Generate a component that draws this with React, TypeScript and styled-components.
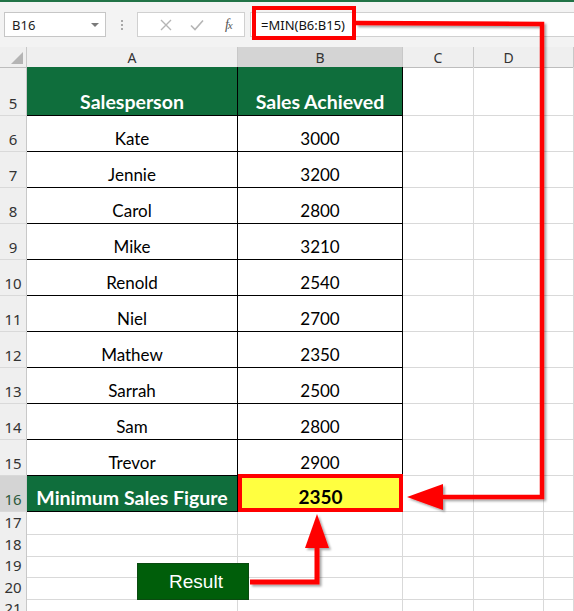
import React from "react";
import styled, { createGlobalStyle } from "styled-components";

const Global = createGlobalStyle`
  html, body { margin: 0; padding: 0; background: #ffffff; overflow: hidden; }
  * { box-sizing: border-box; }
`;

const GRID = "#d9d9d9";
const HEAD_BG = "#efefef";
const HEAD_SEL = "#d4d4d4";
const GREEN = "#0f6e3c";

const Page = styled.div`
  position: relative;
  width: 574px;
  height: 611px;
  overflow: hidden;
  background: #fff;
  font-family: "Lato", "Noto Sans", sans-serif;
`;

const FormulaBar = styled.div`
  height: 47px;
  border-top: 2px solid #217346;
  background: #f3f3f3;
  display: flex;
  align-items: flex-start;
  padding: 10px 0 0 4px;
`;

const NameBox = styled.div`
  width: 102px;
  height: 25px;
  background: #fff;
  border: 1px solid #c6c6c6;
  display: flex;
  align-items: center;
  justify-content: space-between;
  padding: 0 6px 0 7px;
  font-family: "Noto Sans", "Open Sans", sans-serif;
  font-size: 13px;
  color: #222;
`;

const DropCaret = styled.span`
  width: 0;
  height: 0;
  border-left: 4px solid transparent;
  border-right: 4px solid transparent;
  border-top: 4px solid #7a7a7a;
`;

const Dots = styled.div`
  width: 31px;
  height: 25px;
  display: flex;
  flex-direction: column;
  align-items: center;
  justify-content: center;
  gap: 2px;
  span {
    width: 2px;
    height: 2px;
    background: #a8a8a8;
  }
`;

const ButtonsBox = styled.div`
  width: 108px;
  height: 25px;
  background: #fff;
  border: 1px solid #d0d0d0;
  display: flex;
  align-items: center;
  padding-left: 12px;
`;

const IconSlot = styled.div`
  width: 37px;
  height: 23px;
  display: flex;
  align-items: center;
  justify-content: center;
`;

const Fx = styled.span`
  font-family: "Liberation Serif", "DejaVu Serif", serif;
  font-style: italic;
  font-size: 14px;
  color: #555;
  letter-spacing: -1px;
  small { font-size: 11px; }
`;

const FormulaBox = styled.div`
  flex: 1;
  margin-left: 5px;
  height: 25px;
  background: #fff;
  border: 1px solid #d0d0d0;
  border-right: none;
  display: flex;
  align-items: center;
  padding-left: 10px;
  font-family: "Noto Sans", "Open Sans", sans-serif;
  font-size: 13px;
  color: #111;
`;

const Sheet = styled.div`
  position: relative;
`;

const Row = styled.div<{ $h: number }>`
  display: grid;
  grid-template-columns: 27px 211px 165px 71px 70px 1fr;
  height: ${(p) => p.$h}px;
`;

const Corner = styled.div`
  background: ${HEAD_BG};
  border-right: 1px solid #c8c8c8;
  border-bottom: 1px solid #bdbdbd;
  position: relative;
  &::after {
    content: "";
    position: absolute;
    right: 3px;
    bottom: 3px;
    width: 0;
    height: 0;
    border-left: 12px solid transparent;
    border-bottom: 12px solid #b4b4b4;
  }
`;

const ColHead = styled.div<{ $sel?: boolean }>`
  background: ${(p) => (p.$sel ? HEAD_SEL : HEAD_BG)};
  border-right: 1px solid #c8c8c8;
  border-bottom: 1px solid #bdbdbd;
  display: flex;
  align-items: center;
  justify-content: center;
  font-family: "Noto Sans", "Open Sans", sans-serif;
  font-size: 14px;
  color: #333;
  padding-top: 1px;
`;

const RowHead = styled.div<{ $sel?: boolean }>`
  background: ${(p) => (p.$sel ? HEAD_SEL : HEAD_BG)};
  border-right: 1px solid #c8c8c8;
  border-bottom: 1px solid ${GRID};
  display: flex;
  align-items: flex-end;
  justify-content: center;
  padding-bottom: 2px;
  font-family: "Noto Sans", "Open Sans", sans-serif;
  font-size: 15px;
  line-height: 20px;
  color: ${(p) => (p.$sel ? "#2d5a3d" : "#333")};
`;

const Cell = styled.div`
  border-right: 1px solid ${GRID};
  border-bottom: 1px solid ${GRID};
`;

const TableCell = styled.div<{ $head?: boolean }>`
  background: ${(p) => (p.$head ? GREEN : "#fff")};
  color: ${(p) => (p.$head ? "#fff" : "#000")};
  border-right: 1px solid #000;
  border-bottom: 1px solid #000;
  display: flex;
  align-items: flex-end;
  justify-content: center;
  padding-bottom: ${(p) => (p.$head ? 2 : 1)}px;
  font-size: ${(p) => (p.$head ? 19.5 : 17)}px;
  line-height: 22px;
  font-weight: ${(p) => (p.$head ? 700 : 400)};
`;

const ResultCell = styled.div`
  background: #ffff40;
  border: 4px solid #ff0000;
  margin-top: -2px;
  display: flex;
  align-items: center;
  justify-content: center;
  padding-top: 7px;
  font-size: 19px;
  font-weight: 700;
  color: #000;
`;

const ResultButton = styled.div`
  position: absolute;
  left: 137px;
  top: 516px;
  width: 112px;
  height: 37px;
  background: #005e0a;
  border: 1px solid #0a4a10;
  display: flex;
  align-items: center;
  justify-content: center;
  padding-left: 6px;
  font-family: "Liberation Sans", Arial, sans-serif;
  font-size: 19px;
  color: #fff;
`;

const Overlay = styled.svg`
  position: absolute;
  left: 0;
  top: 0;
  pointer-events: none;
`;

const data: [string, string][] = [
  ["Kate", "3000"],
  ["Jennie", "3200"],
  ["Carol", "2800"],
  ["Mike", "3210"],
  ["Renold", "2540"],
  ["Niel", "2700"],
  ["Mathew", "2350"],
  ["Sarrah", "2500"],
  ["Sam", "2800"],
  ["Trevor", "2900"],
];

const EmptyCells = () => (
  <>
    <Cell />
    <Cell />
    <Cell />
  </>
);

export default function App() {
  const small = [17, 18, 19, 20, 21];
  return (
    <Page>
      <Global />
      <FormulaBar>
        <NameBox>
          <span>B16</span>
          <DropCaret />
        </NameBox>
        <Dots>
          <span />
          <span />
          <span />
        </Dots>
        <ButtonsBox>
          <IconSlot>
            <svg width="12" height="12" viewBox="0 0 12 12">
              <path d="M1 1 L11 11 M11 1 L1 11" stroke="#b5b5b5" strokeWidth="1.4" fill="none" />
            </svg>
          </IconSlot>
          <IconSlot>
            <svg width="14" height="12" viewBox="0 0 14 12">
              <path d="M1 6.5 L5 10.5 L13 1.5" stroke="#b5b5b5" strokeWidth="1.6" fill="none" />
            </svg>
          </IconSlot>
          <IconSlot>
            <Fx>
              f<small>x</small>
            </Fx>
          </IconSlot>
        </ButtonsBox>
        <FormulaBox>=MIN(B6:B15)</FormulaBox>
      </FormulaBar>

      <Sheet>
        <Row $h={20}>
          <Corner />
          <ColHead>A</ColHead>
          <ColHead $sel>B</ColHead>
          <ColHead>C</ColHead>
          <ColHead>D</ColHead>
          <ColHead />
        </Row>
        <Row $h={49}>
          <RowHead>5</RowHead>
          <TableCell $head>Salesperson</TableCell>
          <TableCell $head>Sales Achieved</TableCell>
          <EmptyCells />
        </Row>
        {data.map(([name, val], i) => (
          <Row $h={36} key={name + i}>
            <RowHead>{i + 6}</RowHead>
            <TableCell>{name}</TableCell>
            <TableCell>{val}</TableCell>
            <EmptyCells />
          </Row>
        ))}
        <Row $h={36}>
          <RowHead $sel>16</RowHead>
          <TableCell $head>Minimum Sales Figure</TableCell>
          <ResultCell>2350</ResultCell>
          <EmptyCells />
        </Row>
        {small.map((n, i) => (
          <Row $h={i % 2 === 0 ? 22 : 21} key={n}>
            <RowHead>{n}</RowHead>
            <Cell />
            <Cell />
            <EmptyCells />
          </Row>
        ))}
        <ResultButton>Result</ResultButton>
      </Sheet>

      <Overlay width="574" height="611" viewBox="0 0 574 611">
        <defs>
          <filter id="sh" x="-10%" y="-10%" width="130%" height="130%">
            <feDropShadow dx="2" dy="2" stdDeviation="1.2" floodColor="#000" floodOpacity="0.35" />
          </filter>
        </defs>
        <rect x="254" y="8" width="100" height="30" fill="none" stroke="#ff0000" strokeWidth="4" />
        <g filter="url(#sh)">
          <polyline points="356,23 542,24 542,497 440,497" fill="none" stroke="#ff0000" strokeWidth="4.5" strokeLinejoin="miter" />
          <polygon points="407,497 443,484 443,510" fill="#ff0000" />
          <polyline points="250,582 317,582 317,545" fill="none" stroke="#ff0000" strokeWidth="5" strokeLinejoin="miter" />
          <polygon points="317,514 305,548 329,548" fill="#ff0000" />
        </g>
      </Overlay>
    </Page>
  );
}
